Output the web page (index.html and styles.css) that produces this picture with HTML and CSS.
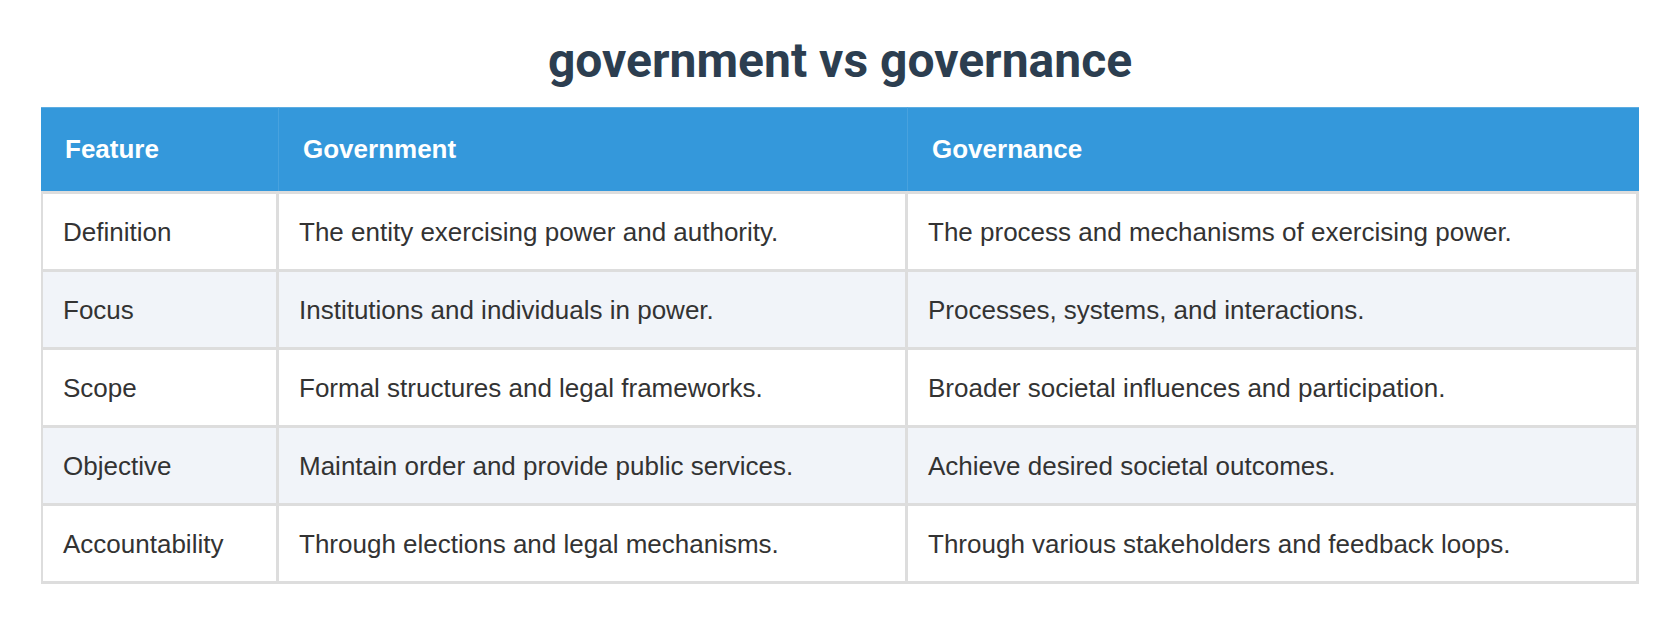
FILE: index.html
```html
<!DOCTYPE html>
<html lang="en">
<head>
<meta charset="utf-8">
<title>government vs governance</title>
<link rel="stylesheet" href="styles.css">
</head>
<body>
<main class="page">
  <h1 class="title">government vs governance</h1>
  <table class="compare">
    <thead>
      <tr>
        <th class="col-feature">Feature</th>
        <th class="col-gov">Government</th>
        <th class="col-gnc">Governance</th>
      </tr>
    </thead>
    <tbody>
      <tr>
        <td>Definition</td>
        <td>The entity exercising power and authority.</td>
        <td>The process and mechanisms of exercising power.</td>
      </tr>
      <tr>
        <td>Focus</td>
        <td>Institutions and individuals in power.</td>
        <td>Processes, systems, and interactions.</td>
      </tr>
      <tr>
        <td>Scope</td>
        <td>Formal structures and legal frameworks.</td>
        <td>Broader societal influences and participation.</td>
      </tr>
      <tr>
        <td>Objective</td>
        <td>Maintain order and provide public services.</td>
        <td>Achieve desired societal outcomes.</td>
      </tr>
      <tr>
        <td>Accountability</td>
        <td>Through elections and legal mechanisms.</td>
        <td>Through various stakeholders and feedback loops.</td>
      </tr>
    </tbody>
  </table>
</main>
</body>
</html>
```

FILE: styles.css
```css
html, body {
  margin: 0;
  padding: 0;
  background: #ffffff;
}

.page {
  padding: 32px 41px 0;
}

.title {
  margin: 0 0 18px;
  font-family: Roboto, "Liberation Sans", sans-serif;
  font-weight: 700;
  font-size: 48px;
  line-height: normal;
  color: #2c3e50;
  text-align: center;
}

.compare {
  width: 1598px;
  table-layout: fixed;
  border-collapse: separate;
  border-spacing: 0;
  font-family: "Liberation Sans", Arial, sans-serif;
  font-size: 26px;
  line-height: 30px;
}

.compare th,
.compare td {
  box-sizing: border-box;
  text-align: left;
  vertical-align: middle;
}

.compare th {
  background: #3498db;
  color: #ffffff;
  font-weight: 700;
  padding: 26px 24px 27px;
  border-top: 1px solid #5dade2;
  border-right: 1px solid #48a2de;
}

.compare th:last-child {
  border-right: none;
}

.compare .col-feature {
  width: 238px;
  padding-left: 24px;
}

.compare .col-gov {
  width: 629px;
}

.compare td {
  color: #333333;
  padding: 22.5px 20px;
  border-top: 3px solid #dddddd;
  border-right: 3px solid #dddddd;
  background: #ffffff;
}

.compare td:first-child {
  border-left: 2px solid #dddddd;
}

.compare tbody tr:nth-child(even) td {
  background: #f1f4f9;
}

.compare tbody tr:last-child td {
  border-bottom: 3px solid #dddddd;
}
```
